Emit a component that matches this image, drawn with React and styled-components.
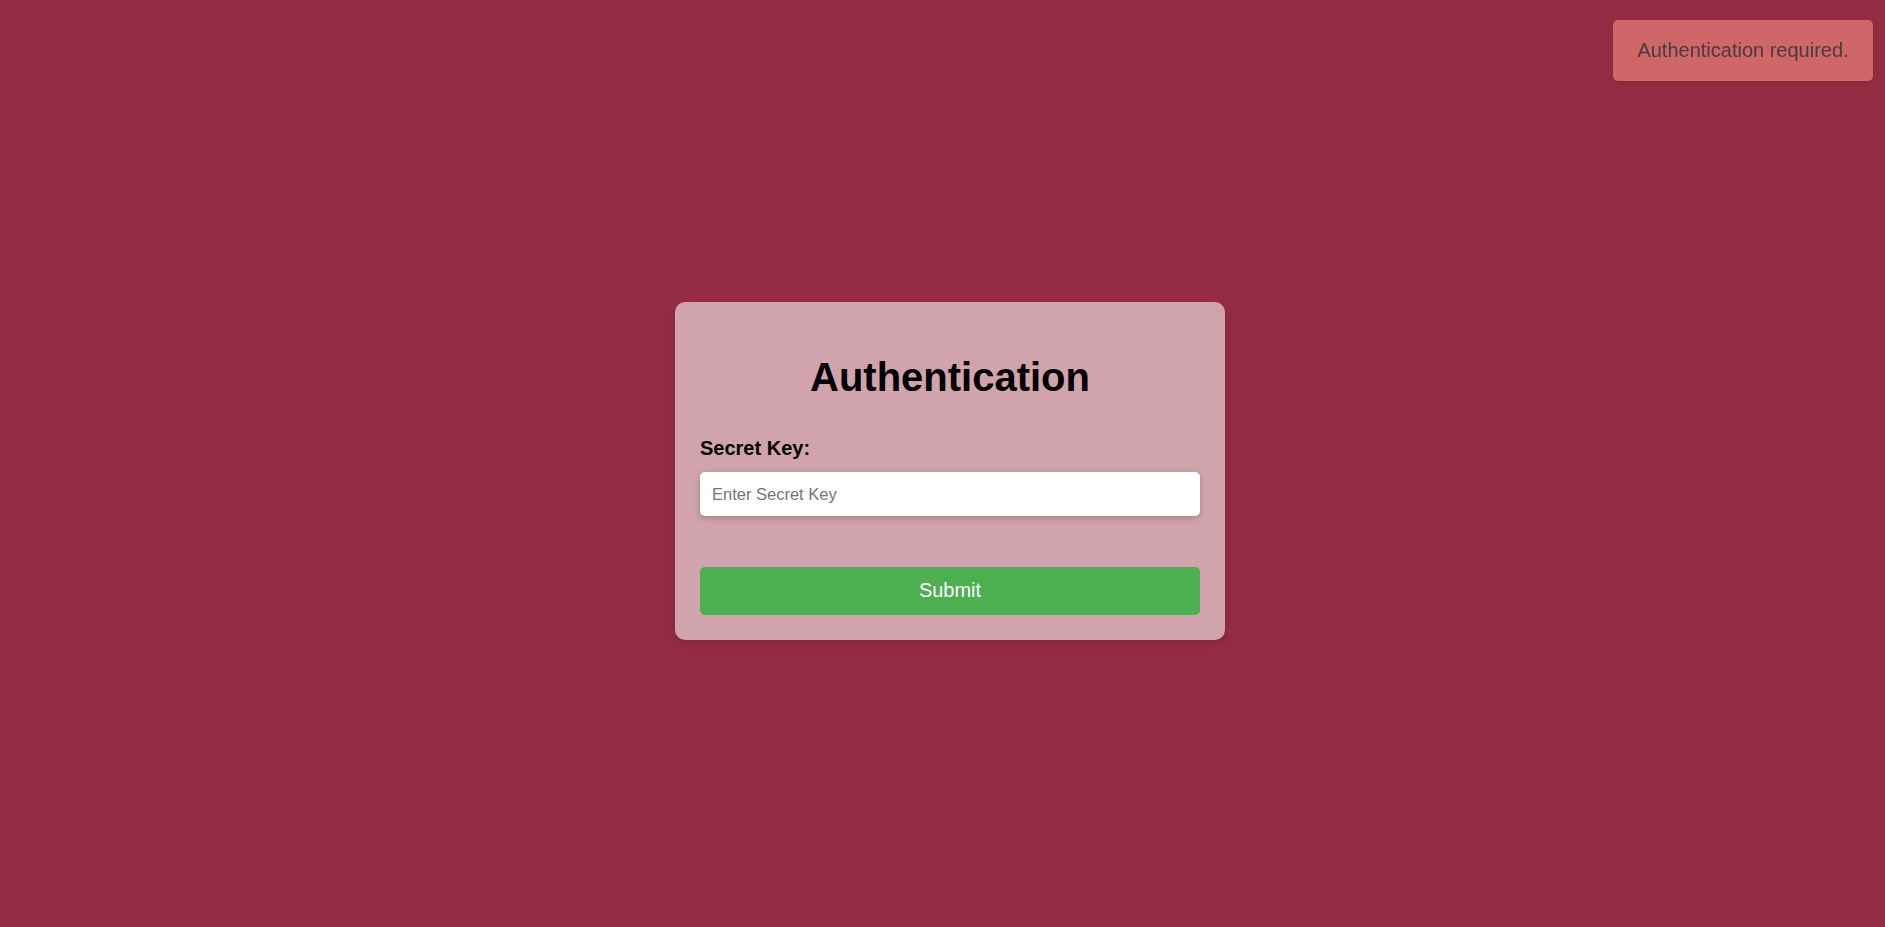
import React from "react";
import styled, { createGlobalStyle } from "styled-components";

const GlobalStyle = createGlobalStyle`
  html, body {
    margin: 0;
    padding: 0;
    overflow: hidden;
    background: #962c43;
    font-family: "Liberation Sans", Arial, sans-serif;
  }
  * { box-sizing: border-box; }
`;

const Page = styled.div`
  width: 100%;
  height: 100vh;
  padding: 15px 0 0 15px;
  display: flex;
  align-items: center;
  justify-content: center;
  background: #962c43;
`;

const Card = styled.form`
  width: 550px;
  padding: 25px;
  background: #d1a3ac;
  border-radius: 10px;
  box-shadow: 0 4px 12px rgba(0, 0, 0, 0.15);
  display: flex;
  flex-direction: column;
`;

const Title = styled.h1`
  margin: 27px 0 37px;
  font-size: 40px;
  line-height: 46px;
  font-weight: bold;
  text-align: center;
  color: #000;
`;

const Label = styled.label`
  display: block;
  font-size: 20px;
  line-height: 23px;
  font-weight: bold;
  color: #000;
  margin-bottom: 12px;
`;

const Input = styled.input`
  width: 100%;
  height: 44px;
  padding: 0 12px;
  border: none;
  border-radius: 5px;
  background: #fff;
  font-family: "Liberation Sans", Arial, sans-serif;
  font-size: 16.5px;
  color: #000;
  box-shadow: 0 2px 6px rgba(0, 0, 0, 0.22);
  outline: none;
  margin-bottom: 51px;

  &::placeholder {
    color: #757575;
  }
`;

const Button = styled.button`
  width: 100%;
  height: 48px;
  padding: 0 0 2px;
  border: none;
  border-radius: 5px;
  background: #4caf50;
  color: #fff;
  font-family: "Liberation Sans", Arial, sans-serif;
  font-size: 20px;
  cursor: pointer;
`;

const Toast = styled.div`
  position: fixed;
  top: 20px;
  right: 12px;
  width: 260px;
  height: 61px;
  display: flex;
  align-items: center;
  justify-content: center;
  background: #cf6769;
  color: #4a3a3c;
  font-size: 20px;
  border-radius: 5px;
  box-shadow: 0 2px 6px rgba(0, 0, 0, 0.12);
`;

export default function App() {
  return (
    <>
      <GlobalStyle />
      <Page>
        <Card onSubmit={(e) => e.preventDefault()}>
          <Title>Authentication</Title>
          <Label htmlFor="secret">Secret Key:</Label>
          <Input id="secret" type="password" placeholder="Enter Secret Key" />
          <Button type="submit">Submit</Button>
        </Card>
      </Page>
      <Toast>Authentication required.</Toast>
    </>
  );
}
